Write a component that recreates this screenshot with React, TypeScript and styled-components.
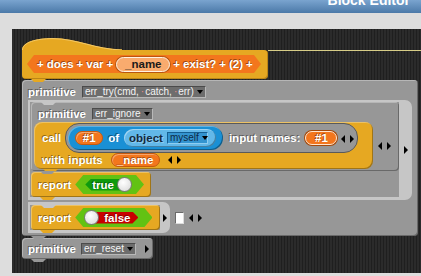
import React from "react"
import styled, { createGlobalStyle } from "styled-components"

const GlobalStyle = createGlobalStyle`
  html, body {
    margin: 0;
    padding: 0;
  }
  body {
    width: 421px;
    height: 276px;
    overflow: hidden;
    background: #dedede;
    font-family: "Liberation Sans", Arial, sans-serif;
  }
`

const GRAY = "#979797"
const RIM = "#c6c6c6"
const CONTROL = "#e6a822"
const ORANGE = "#f3761d"

const Window = styled.div`
  width: 421px;
  height: 276px;
  display: flex;
  flex-direction: column;
  overflow: hidden;
`
const TitleBar = styled.div`
  flex: none;
  height: 13px;
  display: flex;
  justify-content: flex-end;
  overflow: hidden;
  background: linear-gradient(#7aa4cf, #4b79a8);
`
const Title = styled.div`
  margin-top: -7px;
  padding-right: 11px;
  color: #fff;
  font-weight: bold;
  font-size: 14px;
  line-height: 14px;
`
const Frame = styled.div`
  flex: 1;
  display: flex;
  padding: 16px 0 3px 12px;
  background: #dddddd;
  min-height: 0;
`
const ScriptArea = styled.div`
  flex: 1;
  padding: 9px 0 0 10px;
  overflow: hidden;
  background: repeating-linear-gradient(90deg, #2b2b2b 0 2px, #1f1f1f 2px 3px);
`
const Script = styled.div`
  display: flex;
  flex-direction: column;
  align-items: flex-start;
`

/* ---- text bits ---- */
const Label = styled.span<{ $dark?: boolean }>`
  font-weight: bold;
  font-size: 11.5px;
  line-height: 14px;
  white-space: nowrap;
  color: ${(p) => (p.$dark ? "#14293d" : "#fff")};
  text-shadow: ${(p) =>
    p.$dark ? "1px 1px 0 rgba(255,255,255,0.3)" : "-1px -1px 0 rgba(0,0,0,0.4)"};
`
const Dropdown = styled.span<{ $blue?: boolean; $w?: number }>`
  display: inline-flex;
  align-items: center;
  justify-content: space-between;
  gap: 3px;
  height: 12px;
  width: ${(p) => (p.$w ? `${p.$w}px` : "auto")};
  box-sizing: border-box;
  padding: 0 2px;
  font-size: 10px;
  line-height: 10px;
  white-space: nowrap;
  background: ${(p) => (p.$blue ? "#3394d0" : "#6d6d6d")};
  color: ${(p) => (p.$blue ? "#0e2a44" : "#f4f4f4")};
  border: 1px solid;
  border-color: ${(p) =>
    p.$blue ? "#155f92 #8fcdf0 #8fcdf0 #155f92" : "#4b4b4b #b8b8b8 #b8b8b8 #4b4b4b"};
`
const Dot = styled.span`
  margin: 0 1px 0 2px;
  color: #f08c8c;
`
const Caret = styled.span`
  width: 0;
  height: 0;
  border-left: 3.5px solid transparent;
  border-right: 3.5px solid transparent;
  border-top: 4px solid #000;
`
const Arrows = styled.span<{ $gap?: number }>`
  display: inline-flex;
  align-items: center;
  gap: ${(p) => p.$gap ?? 5}px;
  flex: none;
`
const Tri = styled.span<{ $dir: "l" | "r" }>`
  width: 0;
  height: 0;
  border-top: 4px solid transparent;
  border-bottom: 4px solid transparent;
  ${(p) => (p.$dir === "l" ? "border-right: 4px solid #000;" : "border-left: 4px solid #000;")}
`

/* ---- hat ---- */
const HatRow = styled.div`
  display: flex;
  align-items: flex-start;
  align-self: stretch;
`
const Hat = styled.div`
  flex: none;
  width: 246px;
  display: flex;
  flex-direction: column;
`
const HatTop = styled.svg`
  display: block;
  width: 100px;
  height: 12px;
`
const HatBody = styled.div`
  position: relative;
  height: 29px;
  box-sizing: border-box;
  padding: 5px 0 0 5px;
  background: ${CONTROL};
  border-radius: 0 4px 4px 4px;
  box-shadow: inset -1px -1px 0 rgba(110, 70, 0, 0.35);
  &::after {
    content: "";
    position: absolute;
    left: 9px;
    bottom: -3px;
    width: 15px;
    height: 3px;
    background: ${CONTROL};
    clip-path: polygon(0 0, 100% 0, calc(100% - 3px) 100%, 3px 100%);
    z-index: 1;
  }
`
const HatLine = styled.div`
  flex: 1;
  height: 1px;
  margin-top: 12px;
  background: #d6cc86;
`
const Prototype = styled.div`
  display: flex;
  align-items: center;
  gap: 3px;
  width: 234px;
  height: 18px;
  box-sizing: border-box;
  padding-left: 10px;
  background: ${ORANGE};
  clip-path: polygon(7px 0, calc(100% - 7px) 0, 100% 50%, calc(100% - 7px) 100%, 7px 100%, 0 50%);
`
const ProtoSlot = styled.span`
  display: inline-flex;
  align-items: center;
  justify-content: center;
  width: 54px;
  height: 15px;
  box-sizing: border-box;
  border-radius: 8px;
  background: #f9ab6e;
  border: 1px solid #fff2e2;
  box-shadow: 0 0 0 1px #b9560f;
  font-weight: bold;
  font-size: 11.5px;
  color: #1a1a1a;
`

/* ---- command blocks ---- */
const Block = styled.div<{ $color?: string }>`
  position: relative;
  box-sizing: border-box;
  background: ${(p) => p.$color ?? GRAY};
  border-radius: 4px;
  box-shadow: inset 1px 1px 0 rgba(255, 255, 255, 0.3), inset -1px -1px 0 rgba(0, 0, 0, 0.3);
  &::after {
    content: "";
    position: absolute;
    left: 9px;
    bottom: -3px;
    width: 15px;
    height: 3px;
    background: ${(p) => p.$color ?? GRAY};
    clip-path: polygon(0 0, 100% 0, calc(100% - 3px) 100%, 3px 100%);
    z-index: 1;
  }
`
const ErrTry = styled(Block)`
  width: 396px;
  margin-top: 1px;
  padding: 6px 6px 3px 6px;
  display: flex;
  flex-direction: column;
`
const Row = styled.div<{ $gap?: number; $h?: number }>`
  display: flex;
  align-items: center;
  gap: ${(p) => p.$gap ?? 6}px;
  height: ${(p) => (p.$h ? `${p.$h}px` : "auto")};
`
const CSlot = styled.div<{ $top: number; $padTop?: number }>`
  position: relative;
  display: flex;
  margin-top: ${(p) => p.$top}px;
  padding: ${(p) => p.$padTop ?? 2}px 0 3px 2px;
  background: ${RIM};
  border-radius: 0 7px 7px 0;
  &::before {
    content: "";
    position: absolute;
    left: 13px;
    top: ${(p) => p.$padTop ?? 2}px;
    width: 15px;
    height: 3px;
    background: ${RIM};
    clip-path: polygon(0 0, 100% 0, calc(100% - 3px) 100%, 3px 100%);
    z-index: 2;
  }
`
const CSlotInner = styled.div<{ $grow?: boolean }>`
  flex: ${(p) => (p.$grow ? 1 : "none")};
  display: flex;
  flex-direction: column;
  align-items: flex-start;
  padding-left: 1px;
  background: ${GRAY};
`
const CSlotEnd = styled.div<{ $w: number }>`
  width: ${(p) => p.$w}px;
  display: flex;
  align-items: center;
  justify-content: center;
`
const ErrIgnore = styled(Block)`
  align-self: stretch;
  padding: 5px 0 2px 3px;
  display: flex;
  flex-direction: column;
`
const CallBlock = styled(Block)`
  width: 339px;
  padding: 1px 0 2px 8px;
  border-radius: 8px;
  display: flex;
  flex-direction: column;
  align-items: flex-start;
`
const Ring = styled.div`
  display: flex;
  align-items: center;
  flex: none;
  height: 30px;
  box-sizing: border-box;
  padding: 0 3px 0 2px;
  background: ${GRAY};
  border: 1px solid #5a5a5a;
  border-radius: 14px;
`
const OfBlock = styled.div`
  display: flex;
  align-items: center;
  gap: 5px;
  height: 24px;
  box-sizing: border-box;
  padding: 0 7px 0 7px;
  border-radius: 12px;
  background: #1a90d5;
  box-shadow: inset 1px 1px 0 rgba(255, 255, 255, 0.3), inset -1px -1px 0 rgba(0, 0, 0, 0.35);
`
const ObjectBlock = styled.div`
  display: flex;
  align-items: center;
  gap: 4px;
  height: 18px;
  box-sizing: border-box;
  padding: 0 8px 0 5px;
  border-radius: 9px;
  background: #62b8e9;
  box-shadow: inset 1px 1px 0 rgba(255, 255, 255, 0.4), inset -1px -1px 0 rgba(0, 0, 0, 0.3);
`
const VarOval = styled.span<{ $w: number; $template?: boolean }>`
  display: inline-flex;
  align-items: center;
  justify-content: center;
  flex: none;
  width: ${(p) => p.$w}px;
  height: 14px;
  box-sizing: border-box;
  border-radius: 7px;
  background: ${ORANGE};
  border: 1px solid ${(p) => (p.$template ? "#ffe6d0" : "#c45a10")};
  box-shadow: ${(p) => (p.$template ? "0 0 0 1px #a44a0c" : "inset 1px 1px 0 rgba(255,255,255,0.35)")};
  font-weight: bold;
  font-size: 11.5px;
  color: #fff;
  text-shadow: -1px -1px 0 rgba(0, 0, 0, 0.35);
`
const Report = styled(Block)`
  display: flex;
  align-items: center;
  gap: 4px;
  height: 25px;
  padding: 0 7px;
`
const BoolHex = styled.div<{ $pad: string }>`
  display: flex;
  align-items: center;
  height: 19px;
  padding: ${(p) => p.$pad};
  background: #62c213;
  clip-path: polygon(8px 0, calc(100% - 8px) 0, 100% 50%, calc(100% - 8px) 100%, 8px 100%, 0 50%);
`
const Pill = styled.span<{ $on: boolean }>`
  display: inline-flex;
  align-items: center;
  height: 12px;
  box-sizing: border-box;
  padding: ${(p) => (p.$on ? "0 10px 0 7px" : "0 8px 0 12px")};
  margin: ${(p) => (p.$on ? "0 -7px 0 0" : "0 0 0 -7px")};
  background: ${(p) => (p.$on ? "#0e9a0e" : "#c80000")};
  clip-path: ${(p) =>
    p.$on
      ? "polygon(6px 0, 100% 0, 100% 100%, 6px 100%, 0 50%)"
      : "polygon(0 0, calc(100% - 6px) 0, 100% 50%, calc(100% - 6px) 100%, 0 100%)"};
  font-weight: bold;
  font-size: 11.5px;
  color: #fff;
  text-shadow: -1px -1px 0 rgba(0, 0, 0, 0.35);
`
const Knob = styled.span`
  position: relative;
  z-index: 1;
  flex: none;
  width: 15px;
  height: 15px;
  box-sizing: border-box;
  border-radius: 50%;
  border: 1px solid #7a7a7a;
  background: radial-gradient(circle at 40% 35%, #ffffff, #d6d6d6);
`
const WhiteSlot = styled.span`
  width: 9px;
  height: 12px;
  box-sizing: border-box;
  background: #fff;
  border: 1px solid #6a6a6a;
  border-right-color: #ddd;
  border-bottom-color: #ddd;
`
const ErrReset = styled(Block)`
  display: flex;
  align-items: center;
  gap: 5px;
  height: 21px;
  margin-top: 2px;
  padding: 0 4px 0 6px;
`

function BoolToggle({ on }: { on: boolean }) {
  return (
    <BoolHex $pad={on ? "0 12px 0 10px" : "0 14px 0 9px"}>
      {on ? (
        <>
          <Pill $on>true</Pill>
          <Knob />
        </>
      ) : (
        <>
          <Knob />
          <Pill $on={false}>false</Pill>
        </>
      )}
    </BoolHex>
  )
}

function LeftRight({ gap }: { gap?: number }) {
  return (
    <Arrows $gap={gap}>
      <Tri $dir="l" />
      <Tri $dir="r" />
    </Arrows>
  )
}

export default function App() {
  return (
    <Window>
      <GlobalStyle />
      <TitleBar>
        <Title>Block Editor</Title>
      </TitleBar>
      <Frame>
        <ScriptArea>
          <Script>
            <HatRow>
              <Hat>
                <HatTop viewBox="0 0 100 12" preserveAspectRatio="none">
                  <path d="M0 12 C0 4 14 0 31 0 C54 0 74 11 100 11.5 L100 12 Z" fill={CONTROL} />
                  <path d="M0.5 12 C0.5 4.5 14 0.6 31 0.6 C54 0.6 74 11.5 100 12" fill="none" stroke="#f3c866" strokeWidth="1" />
                </HatTop>
                <HatBody>
                  <Prototype>
                    <Label>+</Label>
                    <Label>does</Label>
                    <Label>+</Label>
                    <Label>var</Label>
                    <Label>+</Label>
                    <ProtoSlot>_name</ProtoSlot>
                    <Label>+</Label>
                    <Label>exist?</Label>
                    <Label>+</Label>
                    <Label>(2)</Label>
                    <Label>+</Label>
                  </Prototype>
                </HatBody>
              </Hat>
              <HatLine />
            </HatRow>

            <ErrTry>
              <Row $h={12}>
                <Label>primitive</Label>
                <Dropdown>
                  <span>
                    err_try(cmd,<Dot>·</Dot>catch,<Dot>·</Dot>err)
                  </span>
                  <Caret />
                </Dropdown>
              </Row>

              <CSlot $top={2}>
                <CSlotInner $grow>
                  <ErrIgnore>
                    <Row $h={13} style={{ marginLeft: 4 }}>
                      <Label>primitive</Label>
                      <Dropdown>
                        <span>err_ignore</span>
                        <Caret />
                      </Dropdown>
                    </Row>
                    <Row $gap={5} style={{ marginTop: 2 }}>
                      <CallBlock $color={CONTROL}>
                        <Row $gap={4}>
                          <Label>call</Label>
                          <Ring>
                            <OfBlock>
                              <VarOval $w={28}>#1</VarOval>
                              <Label>of</Label>
                              <ObjectBlock>
                                <Label $dark>object</Label>
                                <Dropdown $blue $w={41}>
                                  <span>myself</span>
                                  <Caret />
                                </Dropdown>
                              </ObjectBlock>
                            </OfBlock>
                            <Label style={{ marginLeft: 6 }}>input names:</Label>
                            <VarOval $w={32} $template style={{ marginLeft: 5 }}>
                              #1
                            </VarOval>
                            <span style={{ marginLeft: 4 }}>
                              <LeftRight />
                            </span>
                          </Ring>
                        </Row>
                        <Row $gap={8} $h={14}>
                          <Label>with inputs</Label>
                          <VarOval $w={49}>_name</VarOval>
                          <LeftRight />
                        </Row>
                      </CallBlock>
                      <LeftRight />
                    </Row>
                  </ErrIgnore>
                  <Report $color={CONTROL} style={{ marginTop: 1 }}>
                    <Label>report</Label>
                    <BoolToggle on />
                  </Report>
                </CSlotInner>
                <CSlotEnd $w={13}>
                  <Tri $dir="r" />
                </CSlotEnd>
              </CSlot>

              <Row $gap={5} style={{ marginTop: 2 }}>
                <CSlot $top={0} $padTop={3}>
                  <CSlotInner>
                    <Report $color={CONTROL} style={{ paddingRight: 8 }}>
                      <Label>report</Label>
                      <BoolToggle on={false} />
                    </Report>
                  </CSlotInner>
                  <CSlotEnd $w={10}>
                    <Tri $dir="r" />
                  </CSlotEnd>
                </CSlot>
                <WhiteSlot />
                <LeftRight />
              </Row>
            </ErrTry>

            <ErrReset>
              <Label>primitive</Label>
              <Dropdown>
                <span>err_reset</span>
                <Caret />
              </Dropdown>
              <Tri $dir="r" style={{ marginLeft: 4 }} />
            </ErrReset>
          </Script>
        </ScriptArea>
      </Frame>
    </Window>
  )
}
